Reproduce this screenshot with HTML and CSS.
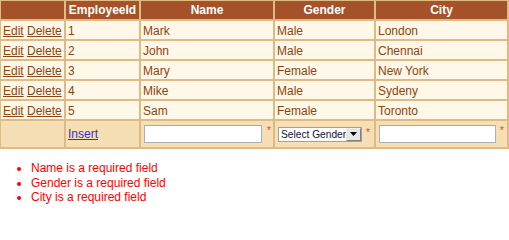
FILE: index.html
```html
<!DOCTYPE html>
<html>
<head>
<meta charset="utf-8">
<link rel="stylesheet" href="styles.css">
</head>
<body>
<table class="grid">
  <colgroup>
    <col class="c1"><col class="c2"><col class="c3"><col class="c4"><col class="c5">
  </colgroup>
  <thead>
    <tr class="head">
      <th></th><th>EmployeeId</th><th>Name</th><th>Gender</th><th>City</th>
    </tr>
  </thead>
  <tbody>
    <tr class="row"><td><a href="#">Edit</a> <a href="#">Delete</a></td><td>1</td><td>Mark</td><td>Male</td><td>London</td></tr>
    <tr class="row"><td><a href="#">Edit</a> <a href="#">Delete</a></td><td>2</td><td>John</td><td>Male</td><td>Chennai</td></tr>
    <tr class="row"><td><a href="#">Edit</a> <a href="#">Delete</a></td><td>3</td><td>Mary</td><td>Female</td><td>New York</td></tr>
    <tr class="row"><td><a href="#">Edit</a> <a href="#">Delete</a></td><td>4</td><td>Mike</td><td>Male</td><td>Sydeny</td></tr>
    <tr class="row"><td><a href="#">Edit</a> <a href="#">Delete</a></td><td>5</td><td>Sam</td><td>Female</td><td>Toronto</td></tr>
  </tbody>
  <tfoot>
    <tr class="foot">
      <td></td>
      <td><a class="insert" href="#">Insert</a></td>
      <td><div class="field"><input class="txt txt-name" type="text"><span class="req">*</span></div></td>
      <td><div class="field"><span class="sel"><span class="sel-text">Select Gender</span><span class="sel-btn"><svg width="7" height="4" viewBox="0 0 7 4"><polygon points="0,0 7,0 3.5,4" fill="#000"/></svg></span></span><span class="req">*</span></div></td>
      <td><div class="field"><input class="txt txt-city" type="text"><span class="req">*</span></div></td>
    </tr>
  </tfoot>
</table>
<ul class="errors">
  <li>Name is a required field</li>
  <li>Gender is a required field</li>
  <li>City is a required field</li>
</ul>
</body>
</html>
```

FILE: styles.css
```css
html, body {
  margin: 0;
  padding: 0;
  background: #fff;
}
body {
  font-family: "Liberation Sans", Arial, sans-serif;
  font-size: 12px;
}
.grid {
  table-layout: fixed;
  border-collapse: separate;
  border-spacing: 2px;
  background: #DEBA84;
  margin: -1px 0 0 -1px;
  width: 510px;
}
.c1 { width: 63px; }
.c2 { width: 73px; }
.c3 { width: 132px; }
.c4 { width: 99px; }
.c5 { width: 131px; }
.grid th, .grid td {
  padding: 2px 2px;
  line-height: 14px;
  height: 14px;
  white-space: nowrap;
  overflow: hidden;
}
.head th {
  background: #A55129;
  color: #fff;
  font-weight: bold;
  text-align: center;
}
.row td {
  background: #FFF7E7;
  color: #8C4510;
  text-align: left;
  padding-top: 3px;
  padding-bottom: 1px;
}
.row a {
  color: #8C4510;
  text-decoration: underline;
}
.foot td {
  background: #F7DFB5;
  color: #8C4510;
  padding: 4px 2px;
  height: 18px;
  vertical-align: middle;
}
.insert {
  color: #3333cc;
  text-decoration: underline;
}
.field {
  display: flex;
  align-items: center;
  gap: 4px;
  padding-left: 1px;
}
.txt {
  box-sizing: border-box;
  height: 18px;
  width: 118px;
  margin: 0;
  padding: 0 2px;
  border: 1px solid #b0b0b0;
  border-top-color: #a8a8a8;
  background: #fff;
  outline: none;
}
.txt-city { width: 117px; }
.req {
  color: #ff3030;
  font-size: 10px;
  line-height: 10px;
  align-self: flex-start;
  margin-top: 1px;
}
.foot td:nth-child(3) .field { gap: 5px; }
.sel {
  box-sizing: border-box;
  display: inline-flex;
  align-items: center;
  height: 15px;
  width: 84px;
  border: 1px solid #a0a0a0;
  background: #fff;
  margin-left: 0;
  padding-left: 2px;
}
.sel-text {
  flex: 1;
  font-size: 10.2px;
  line-height: 13px;
  color: #111133;
  white-space: nowrap;
  overflow: hidden;
}
.sel-btn {
  flex: none;
  box-sizing: border-box;
  width: 15px;
  height: 13px;
  display: flex;
  align-items: center;
  justify-content: center;
  background: #e6e6e6;
  border: 1px solid #808080;
  border-top-color: #f0f0f0;
  border-left-color: #f0f0f0;
}
.errors {
  margin: 12px 0 0 0;
  padding-left: 31px;
  color: #ff0000;
  font-size: 12px;
  line-height: 14.5px;
}
```
